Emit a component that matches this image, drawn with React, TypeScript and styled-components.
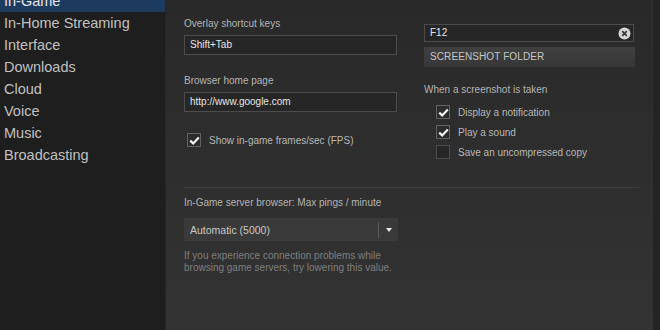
import React from 'react'
import styled, { createGlobalStyle } from 'styled-components'

const GlobalStyle = createGlobalStyle`
  html, body {
    margin: 0;
    padding: 0;
    background: #1f1f1f;
  }
  body {
    font-family: 'Liberation Sans', Arial, sans-serif;
  }
`

const sections = [
  'In-Game',
  'In-Home Streaming',
  'Interface',
  'Downloads',
  'Cloud',
  'Voice',
  'Music',
  'Broadcasting'
]

const screenshotOptions = [
  { label: 'Display a notification', checked: true },
  { label: 'Play a sound', checked: true },
  { label: 'Save an uncompressed copy', checked: false }
]

const CheckMark: React.FC = () => (
  <svg width='11' height='9' viewBox='0 0 11 9'>
    <path
      d='M1.2 4.6 L4.2 7.4 L9.8 1.4'
      fill='none'
      stroke='#f2f2f2'
      strokeWidth='2.2'
    />
  </svg>
)

const ClearIcon: React.FC = () => (
  <svg width='13' height='13' viewBox='0 0 13 13'>
    <circle cx='6.5' cy='6.5' r='6' fill='#d6d6d6' />
    <path
      d='M4.2 4.2 L8.8 8.8 M8.8 4.2 L4.2 8.8'
      stroke='#3a3a3a'
      strokeWidth='1.8'
    />
  </svg>
)

const Check: React.FC<{ checked: boolean; label: string }> = ({
  checked,
  label
}) => (
  <CheckRow>
    <Box $checked={checked}>{checked && <CheckMark />}</Box>
    <CheckLabel>{label}</CheckLabel>
  </CheckRow>
)

const App: React.FC = () => {
  return (
    <>
      <GlobalStyle />
      <Window>
        <Sidebar>
          <NavList>
            {sections.map((name, i) => (
              <NavItem key={name} $active={i === 0}>
                {name}
              </NavItem>
            ))}
          </NavList>
        </Sidebar>
        <Content>
          <TopGrid>
            <Column>
              <Label>Overlay shortcut keys</Label>
              <TextField>Shift+Tab</TextField>
              <Label $spaced>Browser home page</Label>
              <TextField>http://www.google.com</TextField>
              <FpsRow>
                <Check checked label='Show in-game frames/sec (FPS)' />
              </FpsRow>
            </Column>
            <RightColumn>
              <KeyField>
                <span>F12</span>
                <ClearIcon />
              </KeyField>
              <FolderButton>SCREENSHOT FOLDER</FolderButton>
              <Label $topGap={17}>When a screenshot is taken</Label>
              <Options>
                {screenshotOptions.map(opt => (
                  <Check key={opt.label} checked={opt.checked} label={opt.label} />
                ))}
              </Options>
            </RightColumn>
          </TopGrid>
          <Separator />
          <Bottom>
            <Label>In-Game server browser: Max pings / minute</Label>
            <Dropdown>
              <span>Automatic (5000)</span>
              <DropToggle>
                <Arrow />
              </DropToggle>
            </Dropdown>
            <HelpText>
              If you experience connection problems while
              <br />
              browsing game servers, try lowering this value.
            </HelpText>
          </Bottom>
        </Content>
        <Edge />
      </Window>
    </>
  )
}

const Window = styled.div`
  display: flex;
  width: 660px;
  height: 330px;
  overflow: hidden;
  background: #1f1f1f;
`

const Sidebar = styled.div`
  width: 165px;
  flex: none;
  background: #1e1e1e;
  border-right: 1px solid #262626;
  overflow: hidden;
`

const NavList = styled.div`
  margin-top: -10px;
`

const NavItem = styled.div<{ $active?: boolean }>`
  height: 22px;
  line-height: 22px;
  padding-left: 4px;
  font-size: 14.5px;
  color: ${p => (p.$active ? '#e6e6e6' : '#c0c0c0')};
  background: ${p => (p.$active ? '#1d3b5e' : 'transparent')};
  white-space: nowrap;
`

const Content = styled.div`
  flex: 1;
  padding: 18px 13px 0 18px;
  background: linear-gradient(#292929, #333333);
  font-size: 10px;
  color: #b6b6b6;
`

const TopGrid = styled.div`
  display: grid;
  grid-template-columns: 213px 211px;
  column-gap: 27px;
`

const Column = styled.div`
  display: flex;
  flex-direction: column;
`

const RightColumn = styled(Column)`
  padding-top: 6px;
`

const Label = styled.div<{ $spaced?: boolean; $topGap?: number }>`
  height: 12px;
  line-height: 12px;
  margin-top: ${p => (p.$spaced ? 20 : p.$topGap ?? 0)}px;
  margin-bottom: 5px;
  color: #b4b4b4;
  white-space: nowrap;
`

const TextField = styled.div`
  box-sizing: border-box;
  height: 20px;
  line-height: 18px;
  padding-left: 5px;
  border: 1px solid #4c4c4c;
  background: #262626;
  color: #e4e4e4;
  font-size: 10px;
`

const KeyField = styled(TextField)`
  height: 18px;
  line-height: 16px;
  width: 210px;
  display: flex;
  align-items: center;
  justify-content: space-between;
  padding-right: 2px;
`

const FolderButton = styled.div`
  box-sizing: border-box;
  height: 20px;
  line-height: 20px;
  margin-top: 5px;
  padding-left: 6px;
  background: linear-gradient(#404040, #363636);
  color: #c6c6c6;
  font-size: 10px;
  letter-spacing: 0.1px;
`

const FpsRow = styled.div`
  margin-top: 18px;
  padding-left: 3px;
`

const Options = styled.div`
  display: flex;
  flex-direction: column;
  padding-left: 12px;
  margin-top: 1px;
`

const CheckRow = styled.div`
  display: flex;
  align-items: center;
  height: 20px;
`

const Box = styled.div<{ $checked: boolean }>`
  box-sizing: border-box;
  width: 14px;
  height: 14px;
  flex: none;
  display: flex;
  align-items: center;
  justify-content: center;
  border: 1px solid ${p => (p.$checked ? '#626262' : '#4c4c4c')};
  background: ${p => (p.$checked ? '#2c2c2c' : '#262626')};
`

const CheckLabel = styled.span`
  margin-left: 8px;
  color: #b8b8b8;
  white-space: nowrap;
`

const Separator = styled.div`
  height: 1px;
  margin-top: 25px;
  background: #3e3e3e;
`

const Bottom = styled.div`
  display: flex;
  flex-direction: column;
  padding-top: 9px;
`

const Dropdown = styled.div`
  box-sizing: border-box;
  width: 214px;
  height: 23px;
  margin-top: 4px;
  padding-left: 6px;
  display: flex;
  align-items: center;
  justify-content: space-between;
  background: #3a3a3a;
  color: #c8c8c8;
  font-size: 10.5px;
`

const DropToggle = styled.div`
  width: 19px;
  height: 16px;
  display: flex;
  align-items: center;
  justify-content: center;
  border-left: 1px solid #5a5a5a;
`

const Arrow = styled.div`
  width: 0;
  height: 0;
  border-left: 3.5px solid transparent;
  border-right: 3.5px solid transparent;
  border-top: 4px solid #e8e8e8;
`

const HelpText = styled.div`
  margin-top: 9px;
  line-height: 12px;
  color: #7e7e7e;
  white-space: nowrap;
`

const Edge = styled.div`
  width: 7px;
  flex: none;
  background: #242424;
  border-left: 1px solid #2e2e2e;
`

export default App
